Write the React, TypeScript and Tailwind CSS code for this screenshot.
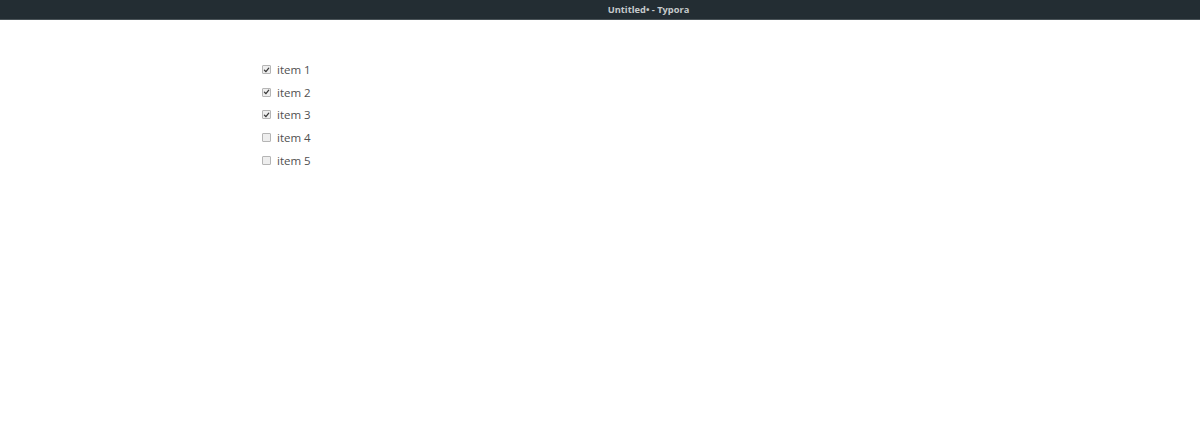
import React from "react";

const items = [
  { label: "item 1", done: true },
  { label: "item 2", done: true },
  { label: "item 3", done: true },
  { label: "item 4", done: false },
  { label: "item 5", done: false },
];

function Box({ checked }: { checked: boolean }) {
  return (
    <span className="flex h-[9px] w-[9px] items-center justify-center rounded-[1px] border border-[#b5b5b5] bg-[#eeeeee]">
      {checked && (
        <svg viewBox="0 0 10 10" className="h-[8px] w-[8px]" fill="none" stroke="#3a3a3a" strokeWidth="1.8">
          <path d="M2 5.2 L4.2 7.4 L8.2 2.4" strokeLinecap="round" strokeLinejoin="round" />
        </svg>
      )}
    </span>
  );
}

export default function App() {
  return (
    <div className="h-[431px] w-[1200px] bg-white font-['Open_Sans',sans-serif]">
      <div className="flex h-[20px] items-center justify-center border-b border-[#4a5358] bg-[#232d33] pl-[97px]">
        <span className="text-[9.3px] font-bold text-[#c5c9cb]">Untitled• - Typora</span>
      </div>

      <ul className="ml-[262px] mt-[38.5px] flex flex-col">
        {items.map((item) => (
          <li key={item.label} className="flex h-[22.6px] items-center gap-[6px] text-[11.5px] text-[#505050]">
            <Box checked={item.done} />
            <span>{item.label}</span>
          </li>
        ))}
      </ul>
    </div>
  );
}
